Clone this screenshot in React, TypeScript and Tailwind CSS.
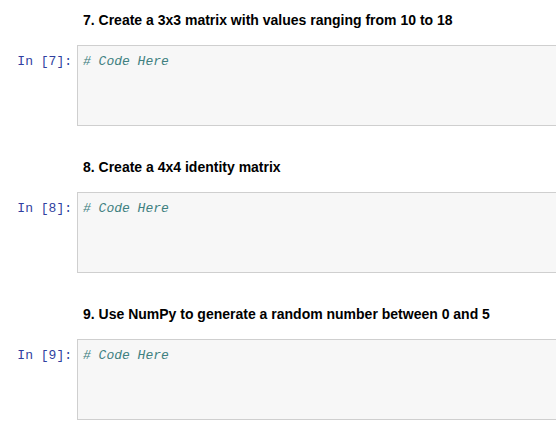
import React from "react";

const cells = [
  { n: 7, title: "7. Create a 3x3 matrix with values ranging from 10 to 18" },
  { n: 8, title: "8. Create a 4x4 identity matrix" },
  { n: 9, title: "9. Use NumPy to generate a random number between 0 and 5" },
];

export default function App() {
  return (
    <div className="w-[556px] h-[432px] overflow-hidden bg-white">
      <div className="w-[600px] flex flex-col pt-[12px]">
        {cells.map((c, i) => (
          <div key={c.n} className={i > 0 ? "flex flex-col mt-[33px]" : "flex flex-col"}>
            <div
              className="pl-[83px] h-[16px] leading-[16px] text-[14px] font-bold text-black"
              style={{ fontFamily: '"Liberation Sans", Arial, sans-serif' }}
            >
              {c.title}
            </div>
            <div className="flex mt-[17px]">
              <div
                className="w-[77px] shrink-0 pt-[8px] pr-[5px] text-right text-[13px] leading-[17px] text-[#303f9f]"
                style={{ fontFamily: '"Liberation Mono", "DejaVu Sans Mono", monospace' }}
              >
                In [{c.n}]:
              </div>
              <div className="flex-1 h-[81px] border border-[#cfcfcf] bg-[#f7f7f7] pl-[5px] pt-[7px]">
                <div
                  className="italic text-[13px] leading-[17px] text-[#408080]"
                  style={{ fontFamily: '"Liberation Mono", "DejaVu Sans Mono", monospace' }}
                >
                  # Code Here
                </div>
              </div>
            </div>
          </div>
        ))}
      </div>
    </div>
  );
}
